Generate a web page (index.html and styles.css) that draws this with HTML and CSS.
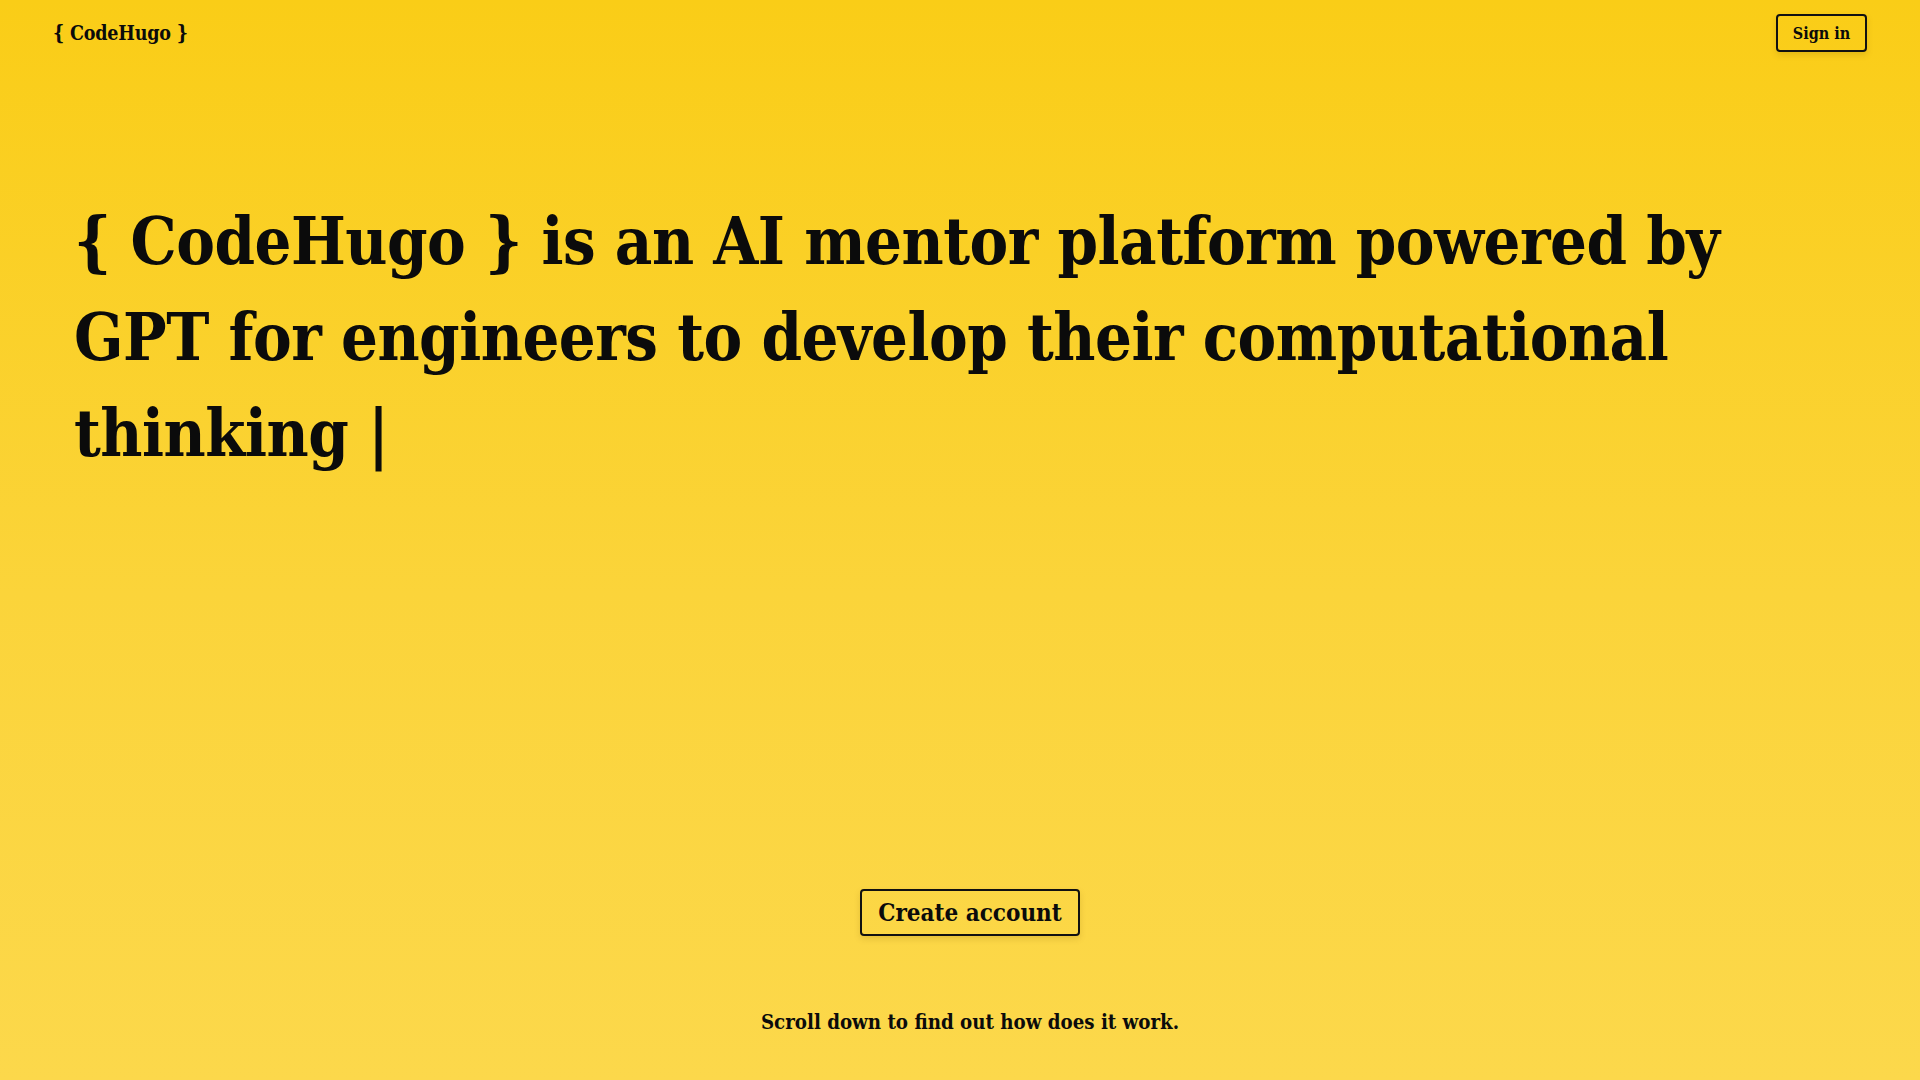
FILE: index.html
```html
<!DOCTYPE html>
<html lang="en">
<head>
<meta charset="utf-8">
<title>CodeHugo</title>
<link rel="stylesheet" href="styles.css">
</head>
<body>
<div class="page">
  <header class="topbar">
    <div class="logo">{ CodeHugo }</div>
    <button class="btn btn-small">Sign in</button>
  </header>
  <main class="hero">
    <h1 class="headline">{ CodeHugo } is an AI mentor platform powered by GPT for engineers to develop their computational thinking <span class="cursor">|</span></h1>
    <div class="cta">
      <button class="btn btn-large">Create account</button>
      <p class="hint">Scroll down to find out how does it work.</p>
    </div>
  </main>
</div>
</body>
</html>
```

FILE: styles.css
```css
* { box-sizing: border-box; }
html, body { margin: 0; padding: 0; }
body {
  font-family: "DejaVu Serif", "Liberation Serif", serif;
  font-stretch: condensed;
  color: #0b0b0b;
  background: #fbd02a;
}
.page {
  min-height: 100vh;
  display: flex;
  flex-direction: column;
  background: linear-gradient(180deg, #facd17 0%, #fbd43a 55%, #fcd84b 100%);
}
.topbar {
  display: flex;
  justify-content: space-between;
  align-items: center;
  padding: 14px 53px 0 53px;
}
.logo {
  font-size: 19.5px;
  font-weight: 700;
  font-stretch: condensed;
  letter-spacing: -0.2px;
}
.btn {
  font-family: inherit;
  font-weight: 700;
  font-stretch: condensed;
  color: #0b0b0b;
  background: transparent;
  border: 2px solid #111;
  border-radius: 4px;
  box-shadow: 0 3px 6px rgba(120, 90, 0, 0.18);
  cursor: pointer;
}
.btn-small {
  font-size: 16px;
  width: 91px;
  height: 38px;
  padding: 0;
}
.btn-large {
  font-size: 24px;
  width: 220px;
  height: 47px;
  padding: 0;
}
.hero {
  flex: 1;
  display: flex;
  flex-direction: column;
  padding: 0 66px 0 74px;
}
.headline {
  margin: 141px 0 0 0;
  max-width: 1780px;
  font-size: 64.5px;
  line-height: 96px;
  font-weight: 700;
  font-stretch: condensed;
  letter-spacing: -0.5px;
}
.cursor { font-weight: 700; }
.cta {
  margin-top: auto;
  display: flex;
  flex-direction: column;
  align-items: center;
  padding-left: 12px;
  padding-bottom: 44px;
}
.hint {
  margin: 72px 0 0 0;
  font-size: 20.3px;
  line-height: 28px;
  font-weight: 700;
  font-stretch: condensed;
}
```
